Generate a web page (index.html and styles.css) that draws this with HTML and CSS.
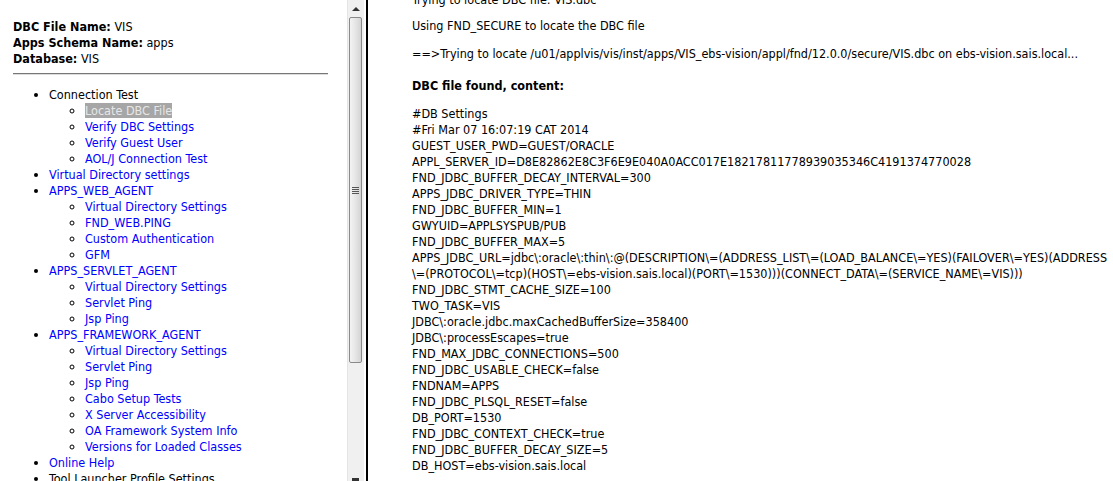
FILE: index.html
```html
<!DOCTYPE html>
<html>
<head>
<meta charset="utf-8">
<link rel="stylesheet" href="styles.css">
</head>
<body>
<div class="frames">
  <div class="left">
    <div class="info">
      <div><b>DBC File Name:</b> VIS</div>
      <div><b>Apps Schema Name:</b> apps</div>
      <div><b>Database:</b> VIS</div>
    </div>
    <hr class="rule">
    <ul class="menu">
      <li>Connection Test
        <ul>
          <li><a class="sel">Locate DBC File</a></li>
          <li><a>Verify DBC Settings</a></li>
          <li><a>Verify Guest User</a></li>
          <li><a>AOL/J Connection Test</a></li>
        </ul>
      </li>
      <li><a>Virtual Directory settings</a></li>
      <li><a>APPS_WEB_AGENT</a>
        <ul>
          <li><a>Virtual Directory Settings</a></li>
          <li><a>FND_WEB.PING</a></li>
          <li><a>Custom Authentication</a></li>
          <li><a>GFM</a></li>
        </ul>
      </li>
      <li><a>APPS_SERVLET_AGENT</a>
        <ul>
          <li><a>Virtual Directory Settings</a></li>
          <li><a>Servlet Ping</a></li>
          <li><a>Jsp Ping</a></li>
        </ul>
      </li>
      <li><a>APPS_FRAMEWORK_AGENT</a>
        <ul>
          <li><a>Virtual Directory Settings</a></li>
          <li><a>Servlet Ping</a></li>
          <li><a>Jsp Ping</a></li>
          <li><a>Cabo Setup Tests</a></li>
          <li><a>X Server Accessibility</a></li>
          <li><a>OA Framework System Info</a></li>
          <li><a>Versions for Loaded Classes</a></li>
        </ul>
      </li>
      <li><a>Online Help</a></li>
      <li>Tool Launcher Profile Settings</li>
    </ul>
  </div>
  <div class="scrollbar">
    <div class="arrow up"></div>
    <div class="track">
      <div class="thumb"><div class="grip"><i></i><i></i><i></i><i></i></div></div>
    </div>
    <div class="arrow down"></div>
  </div>
  <div class="divider"></div>
  <div class="right">
    <p class="first">Trying to locate DBC file: VIS.dbc</p>
    <p>Using FND_SECURE to locate the DBC file</p>
    <p class="wide">==&gt;Trying to locate /u01/applvis/vis/inst/apps/VIS_ebs-vision/appl/fnd/12.0.0/secure/VIS.dbc on ebs-vision.sais.local...</p>
    <p class="found"><b>DBC file found, content:</b></p>
    <div class="content">
      <div>#DB Settings</div>
      <div>#Fri Mar 07 16:07:19 CAT 2014</div>
      <div>GUEST_USER_PWD=GUEST/ORACLE</div>
      <div>APPL_SERVER_ID=D8E82862E8C3F6E9E040A0ACC017E18217811778939035346C4191374770028</div>
      <div>FND_JDBC_BUFFER_DECAY_INTERVAL=300</div>
      <div>APPS_JDBC_DRIVER_TYPE=THIN</div>
      <div>FND_JDBC_BUFFER_MIN=1</div>
      <div>GWYUID=APPLSYSPUB/PUB</div>
      <div>FND_JDBC_BUFFER_MAX=5</div>
      <div>APPS_JDBC_URL=jdbc\:oracle\:thin\:@(DESCRIPTION\=(ADDRESS_LIST\=(LOAD_BALANCE\=YES)(FAILOVER\=YES)(ADDRESS</div>
      <div>\=(PROTOCOL\=tcp)(HOST\=ebs-vision.sais.local)(PORT\=1530)))(CONNECT_DATA\=(SERVICE_NAME\=VIS)))</div>
      <div>FND_JDBC_STMT_CACHE_SIZE=100</div>
      <div>TWO_TASK=VIS</div>
      <div>JDBC\:oracle.jdbc.maxCachedBufferSize=358400</div>
      <div>JDBC\:processEscapes=true</div>
      <div>FND_MAX_JDBC_CONNECTIONS=500</div>
      <div>FND_JDBC_USABLE_CHECK=false</div>
      <div>FNDNAM=APPS</div>
      <div>FND_JDBC_PLSQL_RESET=false</div>
      <div>DB_PORT=1530</div>
      <div>FND_JDBC_CONTEXT_CHECK=true</div>
      <div>FND_JDBC_BUFFER_DECAY_SIZE=5</div>
      <div>DB_HOST=ebs-vision.sais.local</div>
    </div>
  </div>
</div>
</body>
</html>
```

FILE: styles.css
```css
html, body {
  margin: 0;
  padding: 0;
  background: #fff;
  height: 100%;
  overflow: hidden;
}
body {
  font-family: "DejaVu Sans Condensed", "DejaVu Sans", sans-serif;
  font-size: 12.5px;
  line-height: 16px;
  color: #000;
}
.frames {
  display: flex;
  height: 481px;
  width: 1113px;
}
.left {
  width: 347px;
  flex: none;
  overflow: hidden;
  padding: 19px 0 0 13px;
  box-sizing: border-box;
}
.info b { font-weight: bold; }
.rule {
  margin: 6px 0 0 0;
  width: 315px;
  border: 0;
  border-top: 1px solid #777;
  border-bottom: 1px solid #ddd;
  height: 0;
}
.menu {
  margin: 12px 0 0 0;
  padding-left: 36px;
  list-style: disc;
}
.menu ul {
  margin: 0;
  padding-left: 36px;
  list-style: circle;
}
.menu a {
  color: #0000ff;
  text-decoration: none;
}
.menu a.sel {
  background: #a6a6a6;
  color: #e6e6e6;
}
.scrollbar {
  width: 16px;
  flex: none;
  background: #f0f0f0;
  display: flex;
  flex-direction: column;
  border-left: 1px solid #e4e4e4;
  box-sizing: border-box;
}
.arrow {
  height: 17px;
  flex: none;
  display: flex;
  align-items: center;
  justify-content: center;
}
.arrow.up::before {
  content: "";
  border-left: 4px solid transparent;
  border-right: 4px solid transparent;
  border-bottom: 4px solid #333;
}
.arrow.down { align-items: flex-end; height: 10px; }
.arrow.down::before {
  content: "";
  width: 7px;
  height: 3px;
  background: #333;
}
.track {
  flex: 1;
  position: relative;
}
.thumb {
  margin: 0 1px;
  height: 344px;
  border: 1px solid #8a8a8a;
  border-radius: 2px;
  background: linear-gradient(to right, #f3f3f3 0%, #e8e8e8 40%, #d4d4d4 100%);
  display: flex;
  align-items: center;
  justify-content: center;
}
.grip {
  display: flex;
  flex-direction: column;
  gap: 1px;
}
.grip i {
  display: block;
  width: 7px;
  height: 1px;
  background: #555;
}
.divider {
  width: 5px;
  flex: none;
  background: #fff;
  border-left: 1px solid #f0f0f0;
  border-right: 2px solid #000;
  box-sizing: border-box;
}
.right {
  flex: 1;
  overflow: hidden;
  padding-left: 44px;
  box-sizing: border-box;
}
.right p {
  margin: 10px 0 0 0;
  white-space: nowrap;
}
.right p.first { margin-top: -8px; }
.right p.wide { margin-top: 12px; }
.right p.found { margin-top: 16px; }
.content {
  margin-top: 12px;
  white-space: nowrap;
}
```
